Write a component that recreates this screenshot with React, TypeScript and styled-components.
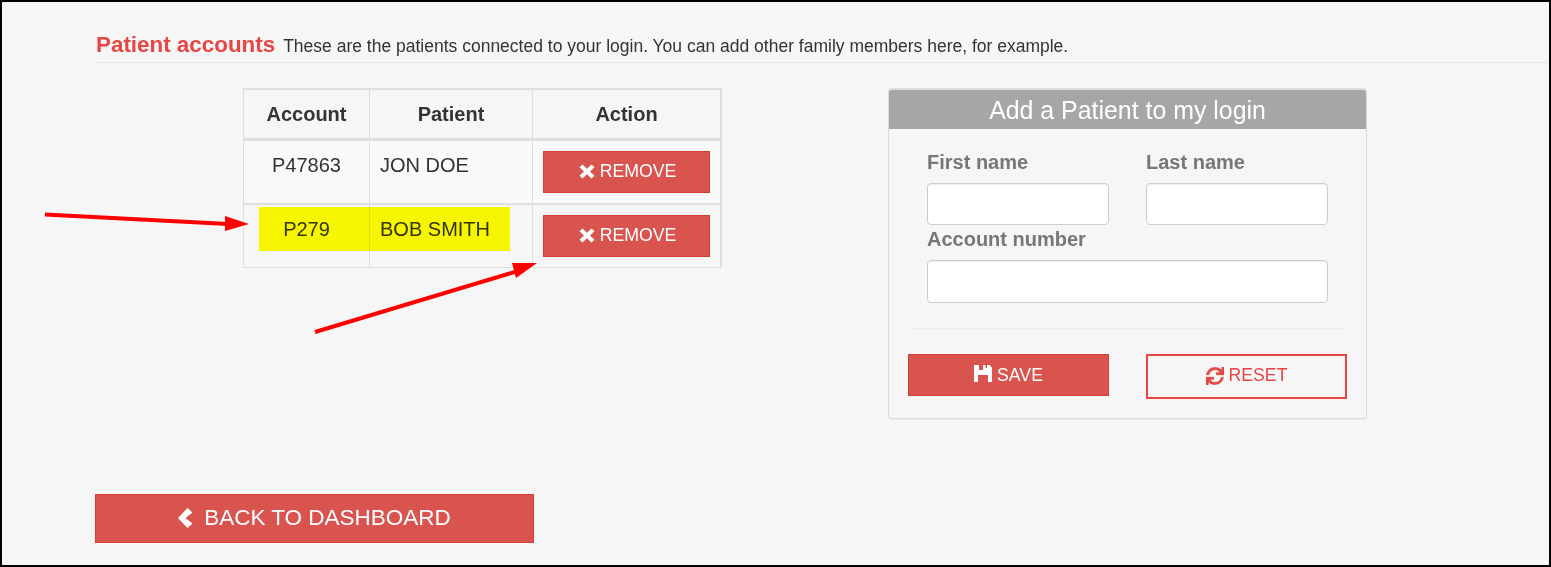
import React from "react";
import styled, { createGlobalStyle } from "styled-components";
import { FaSync } from "react-icons/fa";

const Global = createGlobalStyle`
  * { box-sizing: border-box; }
  html, body { margin: 0; padding: 0; }
  body { font-family: "Liberation Sans", Arial, sans-serif; color: #333; background: #f6f6f6; }
`;

const Frame = styled.div`
  position: relative;
  width: 1551px;
  height: 567px;
  border: 2px solid #000;
  background: #f6f6f6;
  overflow: hidden;
  padding: 28px 0 0 93px;
`;

const Header = styled.header`
  display: flex;
  align-items: baseline;
  gap: 8px;
  height: 33px;
  border-bottom: 1px solid #e6e6e6;
  padding-left: 1px;
`;

const Title = styled.h1`
  margin: 0;
  font-size: 22.4px;
  line-height: 30px;
  font-weight: 700;
  color: #e84545;
`;

const Subtitle = styled.span`
  font-size: 17.5px;
  color: #333;
`;

const Content = styled.main`
  display: flex;
  align-items: flex-start;
  margin-top: 25px;
  padding-left: 148px;
  gap: 166px;
`;

const Table = styled.table`
  width: 479px;
  border-collapse: separate;
  border-spacing: 0;
  table-layout: fixed;
  border-style: solid;
  border-color: #dedede;
  border-width: 2px 2px 1px 1px;
  font-size: 20px;
  flex: none;
`;

const HeadCell = styled.th`
  height: 51px;
  border-right: 1px solid #dedede;
  border-bottom: 3px solid #dedede;
  font-weight: 700;
  text-align: center;
  padding: 0;
  &:last-child { border-right: 0; }
`;

const Row = styled.tr<{ $alt?: boolean }>`
  background: ${(p) => (p.$alt ? "#f6f6f6" : "#f9f9f9")};
  & > td { height: ${(p) => (p.$alt ? 62 : 64)}px; border-bottom-width: ${(p) => (p.$alt ? 0 : 2)}px; }
`;

const Cell = styled.td<{ $center?: boolean }>`
  border-right: 1px solid #dedede;
  border-bottom: 2px solid #dedede;
  vertical-align: top;
  padding: 12px 10px 0;
  line-height: 24px;
  text-align: ${(p) => (p.$center ? "center" : "left")};
`;

const ActionCell = styled.td`
  border-bottom: 2px solid #dedede;
  vertical-align: top;
  padding: 10px 10px 0;
`;

const SolidButton = styled.button<{ $w?: number; $h?: number; $size?: number; $gap?: number; $lift?: number }>`
  display: inline-flex;
  align-items: center;
  justify-content: center;
  gap: ${(p) => p.$gap ?? 5}px;
  width: ${(p) => p.$w ?? 167}px;
  height: ${(p) => p.$h ?? 42}px;
  border: 1px solid #d43f3a;
  background: #d9534f;
  color: #fff;
  font-family: inherit;
  font-size: ${(p) => p.$size ?? 17.7}px;
  padding: 0 0 ${(p) => p.$lift ?? 0}px;
  flex: none;
`;

const RemoveButton = styled(SolidButton)`
  padding: 0 0 2px 2px;
`;

const Card = styled.section`
  width: 479px;
  height: 331px;
  border: 1px solid #dddddd;
  border-top-width: 2px;
  border-radius: 4px;
  box-shadow: 0 1px 1px rgba(0, 0, 0, 0.05);
  overflow: hidden;
  flex: none;
`;

const CardTitle = styled.h2`
  margin: 0;
  height: 39px;
  background: #a6a6a6;
  color: #fff;
  font-size: 24.9px;
  font-weight: 400;
  line-height: 41px;
  text-align: center;
`;

const CardBody = styled.div`
  padding: 22px 19px 0;
`;

const Fields = styled.div`
  display: grid;
  grid-template-columns: 182px 182px;
  column-gap: 37px;
  padding-left: 19px;
`;

const Field = styled.div<{ $wide?: boolean }>`
  grid-column: ${(p) => (p.$wide ? "1 / -1" : "auto")};
`;

const Label = styled.label`
  display: block;
  font-size: 20px;
  line-height: 23px;
  height: 23px;
  font-weight: 700;
  color: #777;
  margin-bottom: 9px;
`;

const WideLabel = styled(Label)`
  margin-top: 3px;
`;

const Input = styled.input<{ $h?: number }>`
  display: block;
  width: 100%;
  height: ${(p) => p.$h ?? 42}px;
  border: 1px solid #ccc;
  border-radius: 4px;
  background: #fff;
  box-shadow: inset 0 1px 1px rgba(0, 0, 0, 0.075);
`;

const Divider = styled.hr`
  margin: 25px 0;
  border: 0;
  border-top: 1px solid #eeeeee;
`;

const Actions = styled.div`
  display: flex;
  align-items: flex-start;
  gap: 37px;
`;

const OutlineButton = styled.button`
  display: inline-flex;
  align-items: center;
  justify-content: center;
  gap: 5px;
  width: 201px;
  height: 45px;
  border: 2px solid #e84545;
  background: #f6f6f6;
  color: #e84545;
  font-family: inherit;
  font-size: 17.7px;
  padding: 0 0 2px;
`;

const Footer = styled.div`
  margin-top: 75px;
`;

const Highlight = styled.div`
  position: absolute;
  left: 257px;
  top: 205px;
  width: 251px;
  height: 44px;
  background: #ffff00;
  mix-blend-mode: multiply;
`;

const Arrows = styled.svg`
  position: absolute;
  left: 0;
  top: 0;
  pointer-events: none;
`;

const RemoveIcon = () => (
  <svg width="16" height="15" viewBox="0 0 16 16" fill="currentColor" preserveAspectRatio="none">
    <polygon points="3.5,0.5 8,5 12.5,0.5 15.5,3.5 11,8 15.5,12.5 12.5,15.5 8,11 3.5,15.5 0.5,12.5 5,8 0.5,3.5" />
  </svg>
);

const SaveIcon = () => (
  <svg width="18" height="17" viewBox="0 0 18 17" fill="currentColor" style={{ marginTop: -3 }}>
    <path
      fillRule="evenodd"
      d="M0 0H15.5L18 2.5V17H0ZM5 0H9V5H5ZM11.5 0H13V3H11.5ZM4 10H14V17H4Z"
    />
  </svg>
);

const BackIcon = () => (
  <svg width="15" height="20" viewBox="0 0 15 20" fill="currentColor">
    <polygon points="9.5,0 14.5,4.5 7.5,10 14.5,15.5 9.5,20 0,10" />
  </svg>
);

const rows = [
  { id: "P47863", name: "JON DOE" },
  { id: "P279", name: "BOB SMITH" },
];

export default function App() {
  return (
    <>
      <Global />
      <Frame>
        <Header>
          <Title>Patient accounts</Title>
          <Subtitle>These are the patients connected to your login. You can add other family members here, for example.</Subtitle>
        </Header>
        <Content>
          <Table>
            <colgroup>
              <col style={{ width: 126 }} />
              <col style={{ width: 163 }} />
              <col style={{ width: 187 }} />
            </colgroup>
            <thead>
              <tr>
                <HeadCell>Account</HeadCell>
                <HeadCell>Patient</HeadCell>
                <HeadCell>Action</HeadCell>
              </tr>
            </thead>
            <tbody>
              {rows.map((r, i) => (
                <Row key={r.id} $alt={i === 1}>
                  <Cell $center>{r.id}</Cell>
                  <Cell>{r.name}</Cell>
                  <ActionCell>
                    <RemoveButton>
                      <RemoveIcon />
                      REMOVE
                    </RemoveButton>
                  </ActionCell>
                </Row>
              ))}
            </tbody>
          </Table>
          <Card>
            <CardTitle>Add a Patient to my login</CardTitle>
            <CardBody>
              <Fields>
                <Field>
                  <Label>First name</Label>
                  <Input />
                </Field>
                <Field>
                  <Label>Last name</Label>
                  <Input />
                </Field>
                <Field $wide>
                  <WideLabel>Account number</WideLabel>
                  <Input $h={43} />
                </Field>
              </Fields>
              <Divider />
              <Actions>
                <SolidButton $w={201}>
                  <SaveIcon />
                  SAVE
                </SolidButton>
                <OutlineButton>
                  <FaSync size={18} stroke="currentColor" strokeWidth={10} />
                  RESET
                </OutlineButton>
              </Actions>
            </CardBody>
          </Card>
        </Content>
        <Footer>
          <SolidButton $w={439} $h={49} $size={22.5} $gap={11} $lift={1}>
            <BackIcon />
            BACK TO DASHBOARD
          </SolidButton>
        </Footer>
        <Highlight />
        <Arrows width="1547" height="563" viewBox="2 2 1547 563">
          <line x1="45" y1="214.5" x2="228" y2="224" stroke="#fe0000" strokeWidth="4" />
          <polygon points="249,224 225,216 225,231" fill="#fe0000" />
          <line x1="315" y1="332" x2="518" y2="271" stroke="#fe0000" strokeWidth="4" />
          <polygon points="537,263 512,263 516,278" fill="#fe0000" />
        </Arrows>
      </Frame>
    </>
  );
}
